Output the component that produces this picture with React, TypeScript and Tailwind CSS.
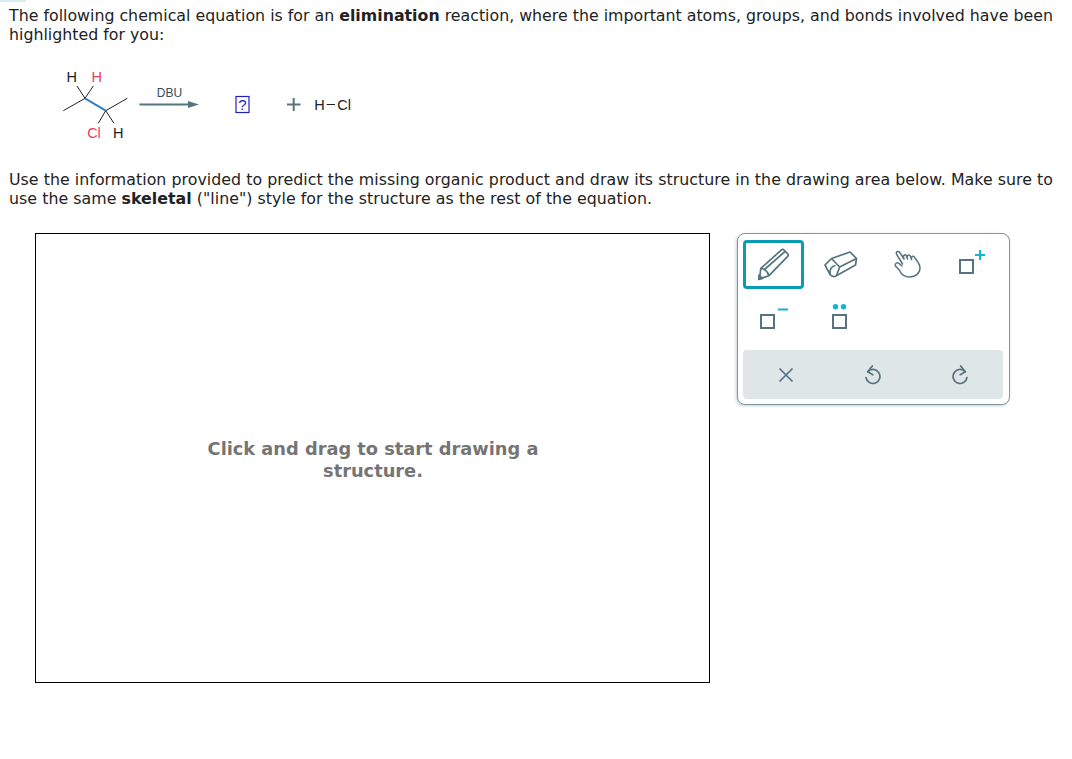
const ink = "#55747f";
const cyan = "#12b5cf";

function Equation() {
  return (
    <svg width="400" height="70" viewBox="40 70 400 70" className="block">
      <g stroke="#222" strokeWidth="1" fill="none">
        <path d="M63.3 110.7L85 98.3M105.7 110.7L127.3 98.3M85 98.3L77 86M85 98.3L93.3 86M105.7 110.7L98.3 123.3M105.7 110.7L114 123.3" />
      </g>
      <path d="M85 98.3L105.7 110.7" stroke="#2f7fc9" strokeWidth="2" fill="none" />
      <g fontFamily="'Liberation Sans', Arial, sans-serif" fontSize="14.5" textAnchor="middle">
        <text x="71.8" y="82" fill="#222">H</text>
        <text x="96.8" y="82" fill="#e8405f">H</text>
        <text x="94" y="137.7" fill="#e8405f">Cl</text>
        <text x="118.3" y="137.7" fill="#222">H</text>
        <text x="169.5" y="96.7" fontSize="12" fill="#3a4d55">DBU</text>
        <text x="319.5" y="110" fill="#222">H</text>
        <text x="344.2" y="110" fill="#222">Cl</text>
      </g>
      <path d="M139.5 104.5H190" stroke={ink} strokeWidth="2" />
      <path d="M188 101L199 104.5L188 108Z" fill={ink} />
      <rect x="236" y="96.5" width="13" height="16" fill="white" stroke="#2020c0" strokeWidth="1.2" />
      <text x="242.5" y="110" fontFamily="'Liberation Sans', Arial, sans-serif" fontSize="15" textAnchor="middle" fill="#2020c0">?</text>
      <path d="M287 104.5H300.5M293.7 98V111" stroke={ink} strokeWidth="2" />
      <path d="M326.7 104.5H335" stroke="#222" strokeWidth="1" />
    </svg>
  );
}

function PencilIcon() {
  return (
    <svg width="32" height="33" viewBox="0 0 32 33" fill="none" stroke={ink} strokeWidth="1.7" strokeLinejoin="round">
      <path d="M2.8 20.5L23.5 1.8Q25 .8 26 2L29.7 5.8Q30.7 7 29.7 8.3L10.8 27.8L1.5 30.8Z" />
      <path d="M2.8 20.5C6.5 20.5 10 24 10.8 27.8M6.5 21.5L27 3.5" />
      <path d="M1 27L4.5 30.5L.8 31.5Z" fill={ink} />
    </svg>
  );
}

function EraserIcon() {
  return (
    <svg width="34" height="27" viewBox="0 0 34 27" fill="none" stroke={ink} strokeWidth="1.7" strokeLinejoin="round">
      <path d="M1 14L7.5 7.5L26 1L32.5 7.5L31.5 14L11 25.5Q8 26 6 23.5Z" />
      <path d="M7.5 7.5L15.7 16L32.5 7.5M15.7 16L12.5 24.5M6 23.5C5.5 18 8 15 11.5 14.5" />
    </svg>
  );
}

function HandIcon() {
  return (
    <svg width="28" height="28" viewBox="0 0 28 28" fill="none" stroke={ink} strokeWidth="1.5" strokeLinecap="round" strokeLinejoin="round">
      <path d="M8.5 14L2.5 4C1.5 1.5 4.5 .5 5.8 2.5L10 9L9.5 7C9 5 11.5 4 12.5 6L13.5 9L13.2 6.5C13.5 4.5 16 4.5 16.5 6.5L17.5 9.5L17.5 7.5C18 5.5 20.5 6 21 8C23 10.5 26 14 26 18C26 23 21.5 27 16 27C10.5 27 7 24 5.5 20.5C4.5 18.5 2.5 17.5 1.5 16C.5 13.5 3 12 5 13.5L8 16" />
    </svg>
  );
}

function ChargeBox({ mark }: { mark: "plus" | "minus" | "dots" }) {
  return (
    <svg width="34" height="28" viewBox="0 0 34 28" fill="none" className="block">
      <rect x="6" y="13" width="13" height="13" stroke={ink} strokeWidth="2" />
      {mark === "plus" && <path d="M21 8H31M26 3V13" stroke={cyan} strokeWidth="2" />}
      {mark === "minus" && <path d="M23 7.5H33" stroke={cyan} strokeWidth="2" />}
      {mark === "dots" && (
        <g fill={cyan}>
          <circle cx="8.5" cy="4.7" r="2.7" />
          <circle cx="16.5" cy="4.7" r="2.7" />
        </g>
      )}
    </svg>
  );
}

function CloseIcon() {
  return (
    <svg width="16" height="16" viewBox="0 0 16 16" fill="none" stroke={ink} strokeWidth="1.7">
      <path d="M1.5 1.5L14.5 14.5M14.5 1.5L1.5 14.5" />
    </svg>
  );
}

function UndoIcon({ flip }: { flip?: boolean }) {
  return (
    <svg width="18" height="20" viewBox="0 0 18 20" fill="none" stroke={ink} strokeWidth="1.7" strokeLinecap="round" strokeLinejoin="round" className={flip ? "-scale-x-100" : ""}>
      <path d="M3.7 6.8A7 7 0 1 1 2 12.5" />
      <path d="M8.3 1L3.7 6.8L8.8 9.8" />
    </svg>
  );
}

function Toolbar() {
  return (
    <div className="w-[273px] h-[172px] rounded-lg border border-[#7f979e] bg-white shadow-[-1px_1px_3px_rgba(85,116,127,0.35)] pt-[6px] pl-[5px] flex flex-col">
      <div className="flex items-start h-[49px]">
        <div className="w-[61px] h-[49px] rounded-[4px] border-[3px] border-[#0a9cb5] flex items-center justify-center">
          <PencilIcon />
        </div>
        <div className="ml-[20px] mt-[11px]">
          <EraserIcon />
        </div>
        <div className="ml-[36px] mt-[10px]">
          <HandIcon />
        </div>
        <div className="ml-[32px] mt-[7px]">
          <ChargeBox mark="plus" />
        </div>
      </div>
      <div className="flex items-start mt-[13px] ml-[12px] h-[34px] gap-[38px]">
        <ChargeBox mark="minus" />
        <ChargeBox mark="dots" />
      </div>
      <div className="mt-[14px] w-[260px] h-[49px] rounded-[4px] bg-[#dfe6e8] grid grid-cols-3 items-center justify-items-center">
        <CloseIcon />
        <UndoIcon />
        <UndoIcon flip />
      </div>
    </div>
  );
}

export default function App() {
  return (
    <div className="relative w-[1072px] h-[759px] bg-white text-[#222] font-['DejaVu_Sans','Liberation_Sans',sans-serif] text-[15.8px] leading-[19px]">
      <div className="absolute left-0 top-0 w-[26px] h-[2px] bg-[#d5eef6]" />
      <div className="pl-[9px] pr-[16px] pt-[6px]">
        <p>
          The following chemical equation is for an <b>elimination</b> reaction, where the important atoms, groups, and bonds involved have been highlighted for you:
        </p>
        <div className="ml-[31px] mt-[26px]">
          <Equation />
        </div>
        <p className="mt-[30px] tracking-[0.04px]">
          Use the information provided to predict the missing organic product and draw its structure in the drawing area below. Make sure to use the same <b>skeletal</b> ("line") style for the structure as the rest of the equation.
        </p>
      </div>
      <div className="flex items-start mt-[25px] ml-[35px] gap-[27px]">
        <div className="w-[675px] h-[450px] border border-black flex items-center justify-center">
          <p className="w-[360px] pt-[4px] pl-[1px] text-center text-[17.8px] leading-[22px] font-bold text-[#757575]">
            Click and drag to start drawing a structure.
          </p>
        </div>
        <Toolbar />
      </div>
    </div>
  );
}
